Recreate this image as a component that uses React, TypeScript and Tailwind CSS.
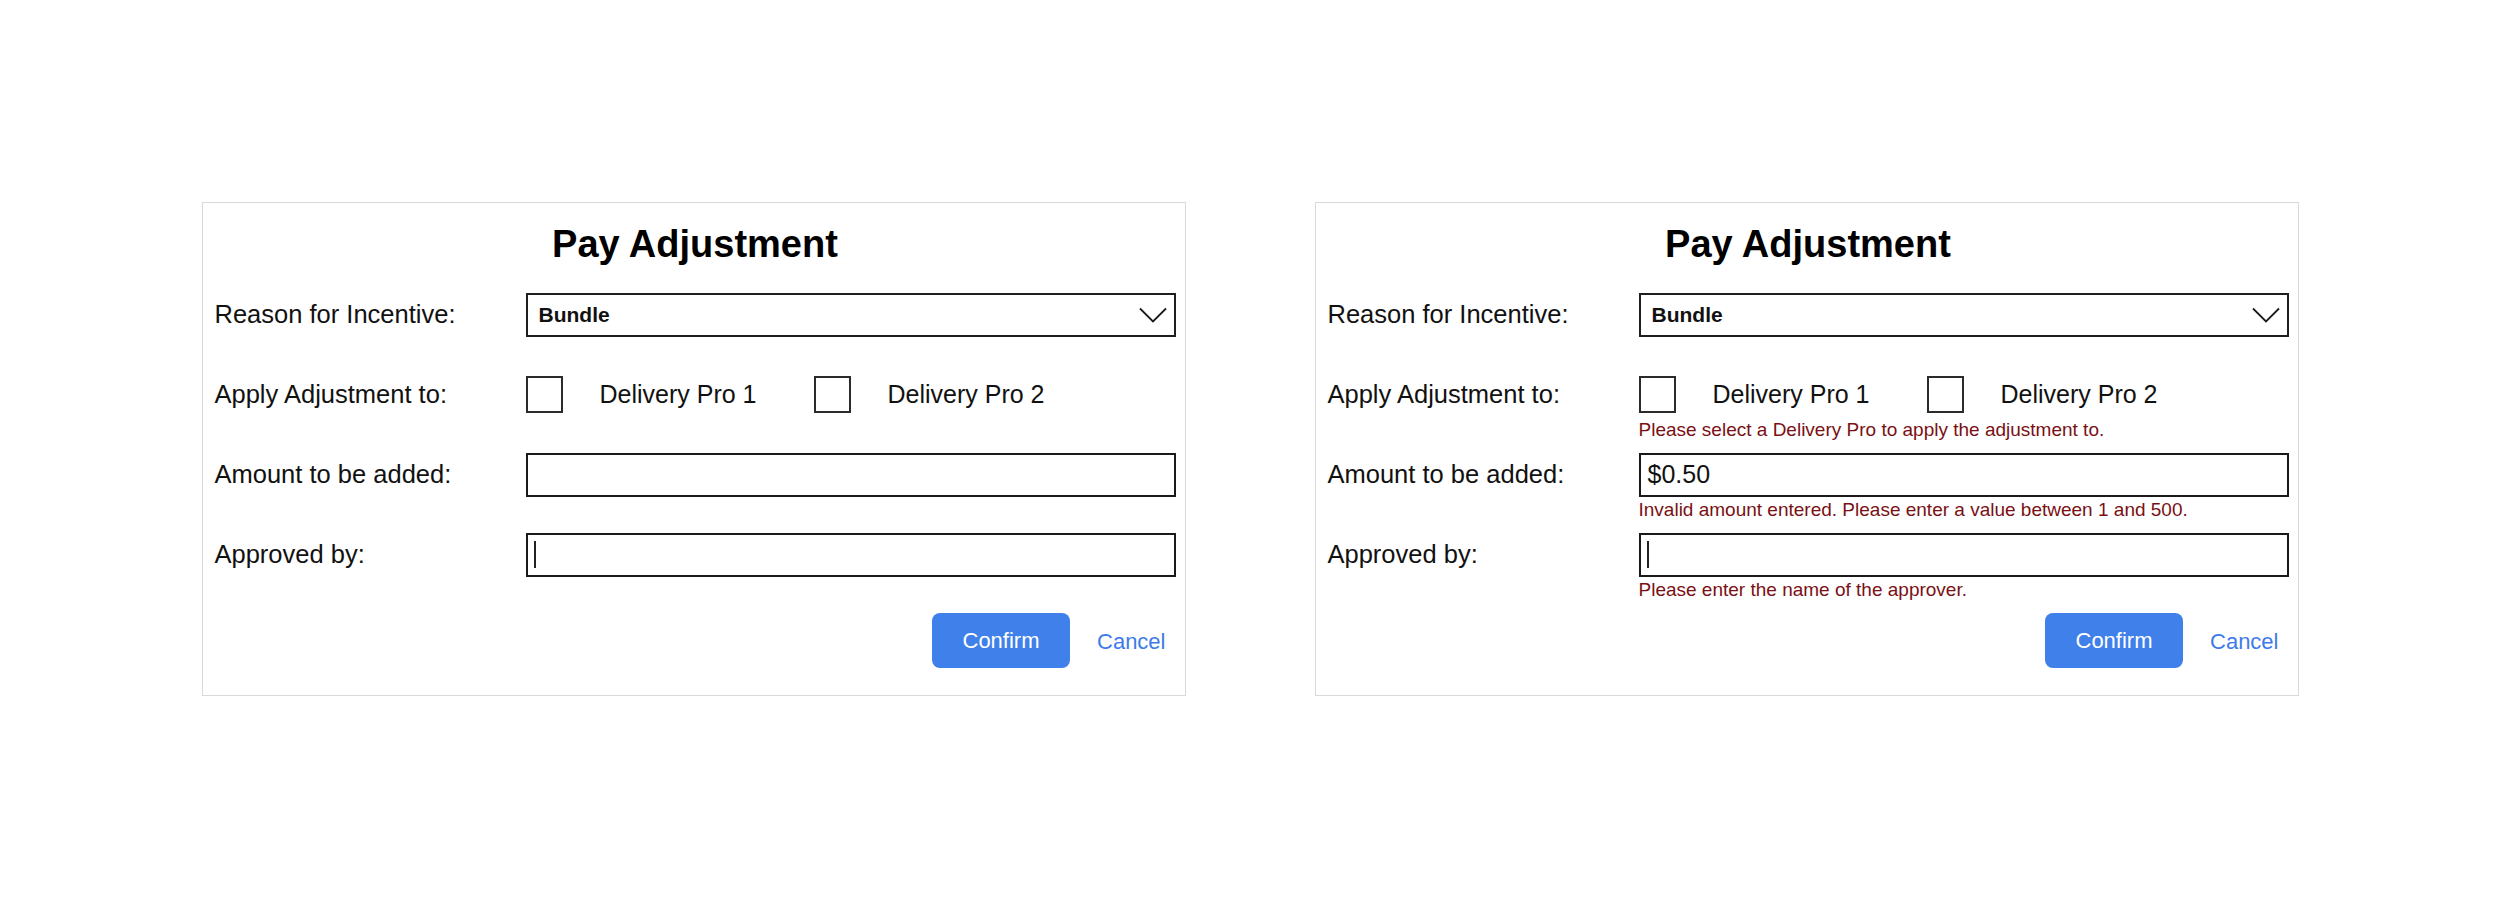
import React from "react";

interface PayAdjustmentCardProps {
  amount?: string;
  showErrors?: boolean;
}

const FIELD_LABELS = {
  reason: "Reason for Incentive:",
  apply: "Apply Adjustment to:",
  amount: "Amount to be added:",
  approver: "Approved by:",
};

const ERRORS = {
  apply: "Please select a Delivery Pro to apply the adjustment to.",
  amount: "Invalid amount entered. Please enter a value between 1 and 500.",
  approver: "Please enter the name of the approver.",
};

const DELIVERY_PROS = ["Delivery Pro 1", "Delivery Pro 2"];

const Chevron = () => (
  <svg width="28" height="16" viewBox="0 0 28 16" fill="none">
    <polyline points="1,1.5 14,14.5 27,1.5" stroke="#1a1a1a" strokeWidth="1.8" />
  </svg>
);

const FormRow: React.FC<{ label: string; error?: string; children: React.ReactNode }> = ({
  label,
  error,
  children,
}) => (
  <div className="grid h-[80px] grid-cols-[311px_1fr]">
    <div className="flex h-[44px] items-center text-[25.5px] text-[#111]">{label}</div>
    <div className="flex flex-col">
      <div className="h-[44px]">{children}</div>
      {error && (
        <p className="mt-[2px] text-[19px] leading-[22px] text-[#7a1014]">{error}</p>
      )}
    </div>
  </div>
);

const PayAdjustmentCard: React.FC<PayAdjustmentCardProps> = ({ amount = "", showErrors = false }) => {
  return (
    <div className="w-[984px] border border-[#d9d9d9] bg-white pt-[20px] pl-[12px] pr-[9px] pb-[27px]">
      {/* Header */}
      <h2 className="mb-[27px] text-center text-[38px] font-bold leading-[43px] text-black">
        Pay Adjustment
      </h2>

      <FormRow label={FIELD_LABELS.reason}>
        <div className="flex h-full items-center justify-between border-2 border-[#1f1f1f] pl-[11px] pr-[7px]">
          <span className="text-[21px] font-bold text-[#111]">Bundle</span>
          <Chevron />
        </div>
      </FormRow>

      <FormRow label={FIELD_LABELS.apply} error={showErrors ? ERRORS.apply : undefined}>
        <div className="flex h-full items-center gap-[57px]">
          {DELIVERY_PROS.map((pro) => (
            <div key={pro} className="flex items-center gap-[37px]">
              <span className="block h-[37px] w-[37px] border-2 border-[#2b2b2b] bg-white" />
              <span className="text-[25px] text-[#111]">{pro}</span>
            </div>
          ))}
        </div>
      </FormRow>

      <FormRow label={FIELD_LABELS.amount} error={showErrors ? ERRORS.amount : undefined}>
        <div className="flex h-full items-center border-2 border-[#1a1a1a] pl-[7px] text-[25px] text-[#111]">
          {amount}
        </div>
      </FormRow>

      <FormRow label={FIELD_LABELS.approver} error={showErrors ? ERRORS.approver : undefined}>
        <div className="flex h-full items-center border-2 border-[#1a1a1a] pl-[6px]">
          <span className="block h-[27px] w-[2px] bg-[#222]" />
        </div>
      </FormRow>

      {/* Actions */}
      <div className="flex items-center justify-end gap-[27px] pr-[10px]">
        <button className="h-[55px] w-[138px] rounded-[8px] bg-[#4080ea] text-[22px] text-white">
          Confirm
        </button>
        <button className="mt-[3px] text-[22px] text-[#3d7be8]">Cancel</button>
      </div>
    </div>
  );
};

export default function App() {
  return (
    <div className="flex h-screen w-full items-center justify-center gap-[129px] bg-white font-['Liberation_Sans',Arial,sans-serif]">
      <PayAdjustmentCard />
      <PayAdjustmentCard amount="$0.50" showErrors />
    </div>
  );
}
